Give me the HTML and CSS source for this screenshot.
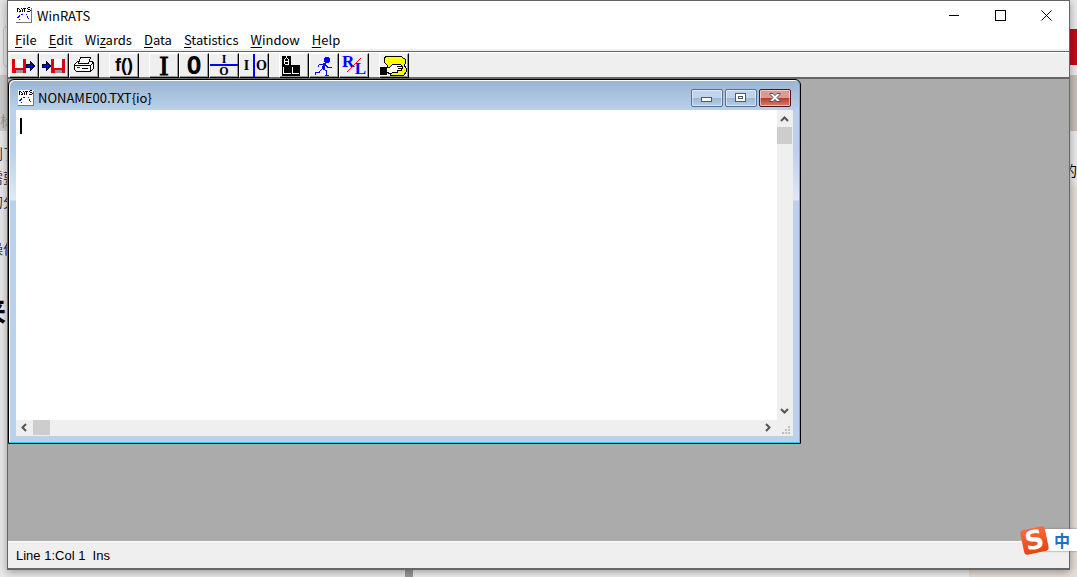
FILE: index.html
```
<!DOCTYPE html>
<html lang="en">
<head>
  <meta charset="UTF-8" />
  <title>WinRATS</title>
  <link rel="stylesheet" href="styles.css">
</head>
<body>

  <!-- Shared application icon -->
  <svg class="defs" aria-hidden="true">
    <symbol id="app-icon" viewBox="0 0 16 16" shape-rendering="crispEdges">
      <path fill="#fff" d="M0 0h16v16H0z"/>
      <path fill="#777" d="M15 1h1v15H0v-1h15z"/>
      <path fill="#000" d="M1 1h2v1H1zM1 2h1v3H1zM3 2h1v1H3zM3 4h1v1H3zM5 1h1v1H5zM4 3h1v2H4zM6 2h1v3H6zM7 1h3v1H7zM8 2h1v3H8zM12 0h2v1h-2zM11 1h1v1h-1zM12 2h2v1h-2zM14 3h1v1h-1zM11 4h3v1h-3z"/>
      <path fill="#00f" d="M1 10h2v1H1zM3 8h1v1H3zM2 9h2v1H2zM5 7h2v1H5zM10 7h1v1h-1zM11 9h1v2h-1zM12 11h1v1h-1zM3 12h1v1H3z"/>
    </symbol>
  </svg>

  <!-- Page behind the window -->
  <div class="backdrop">
    <div class="edge edge-left">
      <div class="edge-top"><span class="edge-tab"></span></div>
      <div class="edge-band"><span class="faint">标</span></div>
      <p>到了</p>
      <p>需要</p>
      <p>的分</p>
      <p class="wide">操作</p>
      <h2>来</h2>
    </div>
    <div class="edge edge-right">
      <div class="red-tab"></div>
      <div class="edge-brown"></div>
      <div class="edge-pale">的</div>
    </div>
    <div class="edge-bottom"><span class="bar"></span><span class="pale"></span><span class="sand"></span></div>
  </div>

  <main class="window">
    <header class="titlebar">
      <svg class="app-icon"><use href="#app-icon"/></svg>
      <h1>WinRATS</h1>
      <div class="controls">
        <button type="button" aria-label="Minimize"><svg width="11" height="11"><path d="M0 5.500h10"/></svg></button>
        <button type="button" aria-label="Maximize"><svg width="11" height="11"><path d="M.5.5h10v10H.5z"/></svg></button>
        <button type="button" aria-label="Close"><svg width="11" height="11" class="smooth"><path d="M.5.5l10 10M10.500.5l-10 10"/></svg></button>
      </div>
    </header>

    <nav class="menubar">
      <button type="button"><u>F</u>ile</button>
      <button type="button"><u>E</u>dit</button>
      <button type="button">Wi<u>z</u>ards</button>
      <button type="button"><u>D</u>ata</button>
      <button type="button"><u>S</u>tatistics</button>
      <button type="button"><u>W</u>indow</button>
      <button type="button"><u>H</u>elp</button>
    </nav>

    <div class="toolbar">
      <div class="group">
        <button type="button" aria-label="Save">
          <svg viewBox="0 0 28 22"><path fill="#fff" d="M4 4h10v10H4z"/><path fill="#e00010" d="M2 4h3v9h8V4h3v14H2z"/><path fill="#999" d="M6 15h7v3H6z"/><path fill="#00f" stroke="#003" d="M16.500 9.500h4v-3l4 4.500-4 4.500v-3h-4z"/></svg>
        </button>
        <button type="button" aria-label="Open">
          <svg viewBox="0 0 28 22"><path fill="#fff" d="M13 4h10v10H13z"/><path fill="#e00010" d="M11 4h3v9h8V4h3v14H11z"/><path fill="#999" d="M15 15h7v3h-7z"/><path fill="#00f" stroke="#003" d="M2.500 9.500h4v-3l4 4.500-4 4.500v-3h-4z"/></svg>
        </button>
        <button type="button" aria-label="Print">
          <svg viewBox="0 0 28 22"><path fill="#fff" stroke="#000" d="M4.500 9.500l3-3h14l2 1v6l-3 3h-14l-2-2z"/><path fill="#fff" stroke="#000" d="M8.500 8.500l2-6h10l-2 6z"/><path fill="none" stroke="#000" d="M4.500 10.500h16v6M20.500 10.500l3-3"/><path fill="#00f" d="M7 12h3v1H7z"/><path fill="#000" d="M12 13h6v1h-6z"/></svg>
        </button>
      </div>
      <div class="group">
        <button type="button" class="func">f()</button>
      </div>
      <div class="group">
        <button type="button" class="big-i">I</button>
        <button type="button" class="big-o">O</button>
        <button type="button" class="stack" aria-label="Tile horizontal"><span>I</span><span>O</span></button>
        <button type="button" class="side" aria-label="Tile vertical"><span>I</span><span>O</span></button>
      </div>
      <div class="group">
        <button type="button" aria-label="Calculator">
          <svg viewBox="0 0 28 22"><path fill="#000" d="M2 1h9v9h9v11H2z"/><path fill="none" stroke="#fff" d="M4.500 9V5l2-3 2 3v4M4.500 6.500h4M4.500 9.500h4M3.500 12v6.500h7M12.500 12v6.500h6"/></svg>
        </button>
        <button type="button" aria-label="Run">
          <svg viewBox="0 0 28 22"><path fill="#00f" d="M15 2h4v1h1v4h-1v1h-4V7h-1V3h1z"/><path fill="none" stroke="#00f" stroke-width="3" d="M15 8l-2 6"/><path fill="none" stroke="#00f" d="M14 9.500H9.500l-2 3M15 9l3 3.500h4M13 14l4 2-1 4h3M12 14l-3 3.500H5v2"/></svg>
        </button>
        <button type="button" class="rl" aria-label="Regression">
          <span>R</span><span>L</span>
          <svg viewBox="0 0 28 22"><path fill="none" stroke="#f00" d="M7 18L21 4"/></svg>
        </button>
      </div>
      <div class="group">
        <button type="button" aria-label="Hand">
          <svg viewBox="0 0 28 22"><path fill="#ff0" stroke="#000" d="M7.500 10.500L4 7V3l3-2h8l2 1 3-1 5 3v5l-1 1 2 3v4l-2 3h-8l-5 1z"/><path fill="#000" d="M0 12h7v8H0z"/><path fill="#fff" stroke="#000" d="M6.500 12.500h3l3-3h8l1 1-1 1h-4 6v2h-5 4v2h-4v2h-4l-3 1-4-1z"/></svg>
        </button>
      </div>
    </div>

    <div class="workspace">
      <section class="child">
        <header class="child-title">
          <svg class="app-icon"><use href="#app-icon"/></svg>
          <h2>NONAME00.TXT{io}</h2>
          <div class="child-controls">
            <button type="button" aria-label="Minimize document"><svg width="14" height="12"><path fill="#fff" stroke="#4c5a6e" d="M1.500 5.500h10v4h-10z"/></svg></button>
            <button type="button" aria-label="Restore document"><svg width="14" height="12"><path fill="#fff" stroke="#4c5a6e" d="M1.500 1.500h10v8h-10zM4.500 4.500h4v2h-4z"/></svg></button>
            <button type="button" class="close" aria-label="Close document"><svg width="14" height="12" class="smooth"><path fill="#fff" stroke="#4a4555" d="M2 1.500h3l2 2 2-2h3v1L9 5.500l3 3v1H9l-2-2-2 2H2v-1l3-3-3-3z"/></svg></button>
          </div>
        </header>
        <div class="editor">
          <textarea aria-label="Document text" spellcheck="false"></textarea>
          <span class="caret"></span>
          <div class="scroll vertical">
            <button type="button" aria-label="Scroll up"><svg width="9" height="8"><path d="M1 6l3.500-3.500L8 6"/></svg></button>
            <span class="thumb"></span>
            <button type="button" aria-label="Scroll down"><svg width="9" height="8"><path d="M1 1l3.500 3.500L8 1"/></svg></button>
          </div>
          <div class="scroll horizontal">
            <button type="button" aria-label="Scroll left"><svg width="9" height="9"><path d="M6 1L2.500 4.500 6 8"/></svg></button>
            <span class="thumb"></span>
            <button type="button" aria-label="Scroll right"><svg width="9" height="9"><path d="M2 1l3.500 3.500L2 8"/></svg></button>
          </div>
          <svg class="grip" width="16" height="16"><path fill="#bfbfbf" d="M11 6h2v2h-2zM8 9h2v2H8zM11 9h2v2h-2zM5 12h2v2H5zM8 12h2v2H8zM11 12h2v2h-2z"/></svg>
        </div>
      </section>
    </div>

    <footer class="status">Line 1:Col 1&nbsp; Ins</footer>
  </main>

  <!-- Input method badge -->
  <div class="ime">
    <span class="ime-logo">S</span>
    <span class="ime-mode" lang="zh">中</span>
  </div>

</body>
</html>
```
FILE: styles.css
```
* {
  box-sizing: border-box;
}

body {
  margin: 0;
  height: 100vh;
  overflow: hidden;
  background: #e8e8e8;
  color: #000;
  font-family: "Noto Sans CJK SC", "Noto Sans", sans-serif;
  font-size: 13px;
}

h1, h2, p {
  margin: 0;
  font-weight: normal;
}

button {
  padding: 0;
  border: none;
  background: none;
  color: inherit;
  font: inherit;
}

svg {
  display: block;
  shape-rendering: crispEdges;
}

.smooth {
  shape-rendering: auto;
}

.defs {
  position: absolute;
  width: 0;
  height: 0;
}

/* page behind the window */
.backdrop {
  position: absolute;
  inset: 0;
  display: flex;
  justify-content: space-between;
  overflow: hidden;
}

.edge {
  width: 8px;
  overflow: hidden;
  font-size: 14px;
  white-space: nowrap;
}

.edge-top {
  height: 75px;
  padding: 26px 0 8px 3px;
  background: #e4e4e4;
}

.edge-tab {
  display: block;
  height: 41px;
  width: 16px;
  border: 1px solid #c4c4c4;
  border-radius: 4px;
}

.edge-band {
  height: 56px;
  padding-top: 36px;
  margin-bottom: 10px;
  background: #cacaca;
  line-height: 18px;
}

.faint {
  color: #999;
}

.edge p {
  margin-left: -11px;
  line-height: 24px;
  color: #3c2850;
}

.edge .wide {
  line-height: 70px;
}

.edge h2 {
  margin-left: -22px;
  font-size: 28px;
  font-weight: bold;
  line-height: 54px;
}

.edge-right {
  padding-top: 29px;
  background: linear-gradient(#e8e8e8 180px, #e2dad3 190px);
}

.red-tab {
  height: 36px;
  margin-bottom: 10px;
  background: #bd0c18;
}

.edge-brown {
  height: 56px;
  background: #c5bdb5;
}

.edge-pale {
  margin-left: -6px;
  line-height: 78px;
}

.edge-bottom {
  position: absolute;
  right: 0;
  bottom: 0;
  left: 405px;
  display: flex;
  height: 8px;
}

.bar {
  width: 8px;
  background: #999;
}

.pale {
  flex: 1;
  background: #eee;
}

.sand {
  width: 108px;
  background: #e6ddd6;
}

/* main window */
.window {
  position: relative;
  display: flex;
  flex-direction: column;
  height: calc(100vh - 7px);
  margin: 0 7px;
  border: 1px solid #666;
  border-bottom-width: 2px;
  background: #efefef;
  box-shadow: 0 2px 8px rgba(0, 0, 0, 0.35);
}

.titlebar {
  display: flex;
  align-items: center;
  height: 30px;
  padding: 0 0 2px 8px;
  background: #fff;
}

.app-icon {
  width: 16px;
  height: 16px;
}

.titlebar h1 {
  flex: 1;
  margin-left: 5px;
  font-size: 13px;
}

.controls {
  display: flex;
}

.controls button {
  display: grid;
  place-items: center;
  width: 46px;
  height: 28px;
}

.controls path {
  fill: none;
  stroke: #000;
}

.menubar {
  display: flex;
  gap: 12px;
  height: 20px;
  padding-left: 7px;
  border-bottom: 2px solid #efefef;
  background: #fff;
}

.menubar button {
  line-height: 18px;
}

.menubar u {
  text-underline-offset: 2px;
}

.toolbar {
  display: flex;
  gap: 10px;
  height: 28px;
  padding: 1px 1px 0;
  border-top: 1px solid #666;
  border-bottom: 2px solid #666;
  box-shadow: inset 0 1px #fff;
}

.group {
  display: flex;
}

.toolbar button {
  position: relative;
  width: 30px;
  height: 25px;
  border: 1px solid;
  border-color: #fff #000 #000 #fff;
  box-shadow: inset -1px -1px #999;
  line-height: 23px;
}

.toolbar svg {
  width: 28px;
  height: 22px;
}

.toolbar .func {
  font: bold 18px/23px "Liberation Sans", sans-serif;
}

.toolbar .big-i {
  font: 28px/23px "Liberation Serif", serif;
  -webkit-text-stroke: 1px #000;
}

.toolbar .big-o {
  font: bold 25px/23px "DejaVu Sans Mono", monospace;
}

.stack span,
.side span {
  font: bold 12px/10px "Liberation Serif", serif;
}

.stack span {
  display: block;
  height: 10px;
}

.stack span + span {
  height: 13px;
  border-top: 2px solid #00f;
}

.toolbar .side {
  display: flex;
}

.side span {
  flex: 1;
  height: 23px;
  font-size: 14px;
  line-height: 23px;
}

.side span + span {
  border-left: 2px solid #00f;
}

.toolbar .rl {
  display: flex;
  justify-content: space-between;
  padding: 0 2px;
  color: #00f;
  font: bold 17px/16px "Liberation Serif", serif;
}

.rl span + span {
  align-self: flex-end;
}

/* slash runs across both letters */
.rl svg {
  position: absolute;
  inset: 0;
}

.workspace {
  flex: 1;
  min-height: 0;
  border-bottom: 1px solid #fff;
  background: #ababab;
}

.status {
  height: 26px;
  padding: 2px 8px 0;
  font: 13px/24px "Liberation Sans", sans-serif;
}

/* document window */
.child {
  display: flex;
  flex-direction: column;
  width: 793px;
  max-width: 100%;
  height: 365px;
  padding: 0 7px;
  border: 1px solid #000;
  border-radius: 6px 6px 0 0;
  background: linear-gradient(#9ab4d1, #b9d1ea 30px, #b9d1ea 70px, #dfe9f5 120px, #b9d1ea 121px);
  box-shadow: inset -1px -1px #22d3ee, inset 1px 1px #fff;
}

.child-title {
  display: flex;
  align-items: center;
  height: 30px;
  padding: 5px 2px 0;
}

.child-title h2 {
  flex: 1;
  margin-left: 4px;
  font-size: 13px;
}

.child-controls {
  display: flex;
  gap: 2px;
}

.child-controls button {
  display: grid;
  place-items: center;
  width: 32px;
  height: 18px;
  border: 1px solid #56708f;
  border-radius: 2px;
  background: linear-gradient(#c1d3e8 50%, #9bb6d3 50%, #b7cfe8);
  box-shadow: inset 0 0 0 1px rgba(255, 255, 255, 0.5);
}

.child-controls .close {
  border-color: #521420;
  background: linear-gradient(#dd9a92 50%, #b83a26 50%, #d5806e);
}

.editor {
  position: relative;
  display: grid;
  flex: 1;
  grid-template: 1fr 16px / 1fr 16px;
  margin-bottom: 7px;
  background: #efefef;
}

.editor textarea {
  width: 100%;
  height: 100%;
  padding: 8px 4px;
  border: none;
  outline: none;
  background: #fff;
  font: 14px/16px "Liberation Mono", monospace;
  resize: none;
}

.caret {
  position: absolute;
  top: 8px;
  left: 4px;
  width: 2px;
  height: 16px;
  background: #000;
}

.scroll {
  display: flex;
}

.vertical {
  flex-direction: column;
}

.scroll button {
  display: grid;
  place-items: center;
}

.vertical button {
  width: 15px;
  height: 17px;
}

.vertical button:last-child {
  margin-top: auto;
}

.horizontal button {
  width: 17px;
  height: 15px;
}

.horizontal button:last-child {
  margin-left: auto;
}

.scroll path {
  fill: none;
  stroke: #555;
  stroke-width: 2;
  shape-rendering: auto;
}

.thumb {
  width: 17px;
  height: 15px;
  background: #cdcdcd;
}

.vertical .thumb {
  width: 15px;
  height: 17px;
}

/* input method badge */
.ime {
  position: absolute;
  right: 0;
  bottom: 23px;
  display: flex;
  align-items: center;
  width: 56px;
  height: 28px;
}

.ime::before {
  content: "";
  position: absolute;
  inset: 3px 0 3px 22px;
  background: #fff;
  box-shadow: 0 0 2px #777;
}

.ime-logo {
  position: relative;
  width: 25px;
  height: 25px;
  margin-left: 1px;
  border-radius: 4px;
  background: linear-gradient(#fa6a3a, #ea4310);
  color: #fff;
  font: bold 26px/25px "DejaVu Sans", sans-serif;
  text-align: center;
  transform: rotate(-12deg);
}

.ime-mode {
  position: relative;
  margin-left: 7px;
  color: #1c6fc4;
  font: bold 16px/22px "Noto Sans CJK SC", sans-serif;
}
```
